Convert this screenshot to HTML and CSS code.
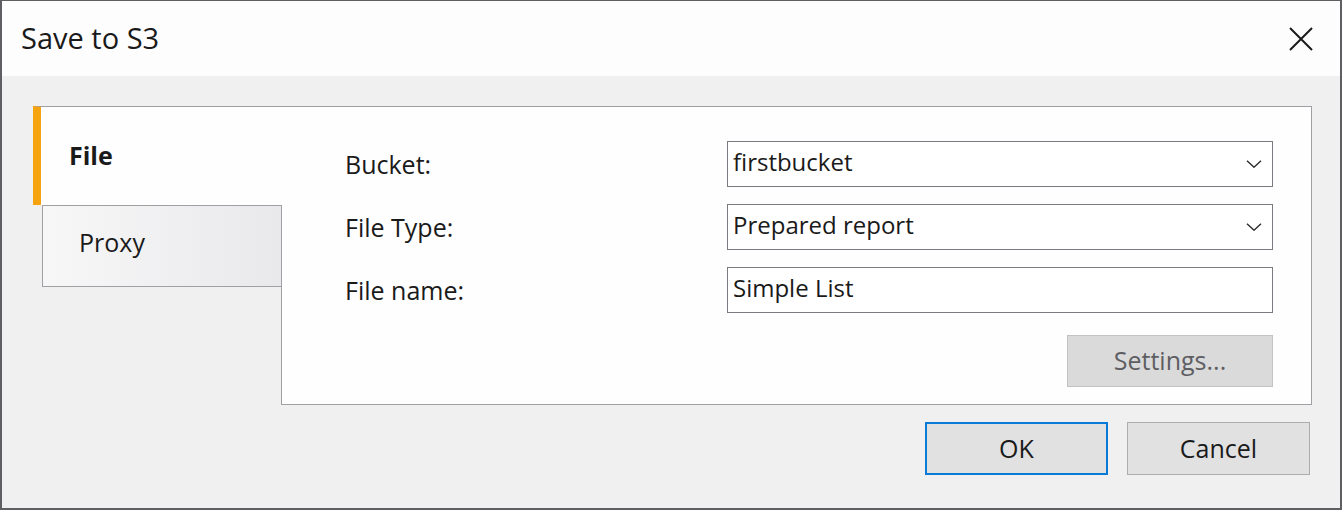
FILE: index.html
```html
<!DOCTYPE html>
<html lang="en">
<head>
    <meta charset="UTF-8">
    <meta name="viewport" content="width=device-width, initial-scale=1.0">
    <title>Save to S3</title>
    <link rel="stylesheet" href="styles.css">
</head>
<body>
    <div class="window">
        <div class="titlebar">
            <span class="title">Save to S3</span>
            <svg class="close" width="24" height="24" viewBox="0 0 24 24">
                <path d="M1 1 L23 23 M23 1 L1 23" stroke="#1a1a1a" stroke-width="2" fill="none"/>
            </svg>
        </div>
        <div class="client">
            <div class="tabs">
                <div class="tab-list">
                    <div class="tab active">File</div>
                    <div class="tab">Proxy</div>
                </div>
                <div class="tab-panel">
                    <div class="form">
                        <label>Bucket:</label>
                        <div class="field combo">
                            <span>firstbucket</span>
                            <svg width="16" height="8" viewBox="0 0 16 8"><path d="M1 0.8 L8 7.2 L15 0.8" stroke="#2a2a2a" stroke-width="1.4" fill="none"/></svg>
                        </div>
                        <label>File Type:</label>
                        <div class="field combo">
                            <span>Prepared report</span>
                            <svg width="16" height="8" viewBox="0 0 16 8"><path d="M1 0.8 L8 7.2 L15 0.8" stroke="#2a2a2a" stroke-width="1.4" fill="none"/></svg>
                        </div>
                        <label>File name:</label>
                        <div class="field">
                            <span>Simple List</span>
                        </div>
                        <button class="settings">Settings...</button>
                    </div>
                </div>
            </div>
            <div class="buttons">
                <button class="default">OK</button>
                <button>Cancel</button>
            </div>
        </div>
    </div>
</body>
</html>
```

FILE: styles.css
```css
body {
    margin: 0;
    font-family: 'Open Sans', 'Noto Sans', sans-serif;
    color: #1a1a1a;
    background-color: #f0f0f1;
}
.window {
    width: 1342px;
    height: 510px;
    box-sizing: border-box;
    border: 2px solid #5f5f63;
    border-top-width: 1px;
    display: flex;
    flex-direction: column;
    background-color: #f0f0f1;
}
.titlebar {
    height: 75px;
    flex-shrink: 0;
    display: flex;
    align-items: center;
    justify-content: space-between;
    padding: 0 27px 0 19px;
    background-color: #fdfdfe;
}
.title {
    font-size: 29px;
    margin-bottom: 2px;
}
.client {
    flex: 1;
    padding: 30px 28px 0 31px;
}
.tabs {
    display: flex;
}
.tab-list {
    width: 248px;
    flex-shrink: 0;
}
.tab {
    position: relative;
    z-index: 1;
    margin-right: -1px;
    display: flex;
    align-items: center;
    box-sizing: border-box;
    font-size: 25px;
}
.tab.active {
    height: 99px;
    padding-left: 28px;
    padding-bottom: 2px;
    font-weight: bold;
    background-color: #fefeff;
    border-top: 1px solid #a0a0a4;
    border-left: 8px solid #f5a30e;
}
.tab:not(.active) {
    height: 82px;
    margin-left: 9px;
    padding-left: 36px;
    padding-bottom: 9px;
    background: linear-gradient(to right, #f7f7f8, #e9e9eb);
    border: 1px solid #a0a0a4;
}
.tab-panel {
    flex: 1;
    height: 299px;
    box-sizing: border-box;
    border: 1px solid #a0a0a4;
    background-color: #fefeff;
}
.form {
    display: grid;
    grid-template-columns: 382px 1fr;
    row-gap: 17px;
    align-items: center;
    padding: 34px 38px 0 63px;
}
.form label {
    font-size: 25px;
    padding-bottom: 1px;
}
.field {
    height: 46px;
    box-sizing: border-box;
    border: 1px solid #7b7a80;
    background-color: #ffffff;
    display: flex;
    align-items: center;
    justify-content: space-between;
    padding: 0 10px 5px 5px;
    font-size: 24px;
}
.combo svg {
    margin-top: 5px;
}
button {
    font-family: inherit;
    font-size: 25px;
    color: #1a1a1a;
    background-color: #e1e1e2;
    border: 1px solid #adadb0;
    box-sizing: border-box;
    padding: 0 0 2px 0;
}
.settings {
    grid-column: 2;
    justify-self: end;
    width: 206px;
    height: 52px;
    margin-top: 5px;
    background-color: #dadadb;
    border-color: #c3c3c6;
    color: #5e5e62;
}
.buttons {
    display: flex;
    justify-content: flex-end;
    gap: 19px;
    margin-top: 17px;
    padding-right: 2px;
}
.buttons button {
    width: 183px;
    height: 53px;
}
.buttons .default {
    border: 2px solid #0b79d6;
}
```
